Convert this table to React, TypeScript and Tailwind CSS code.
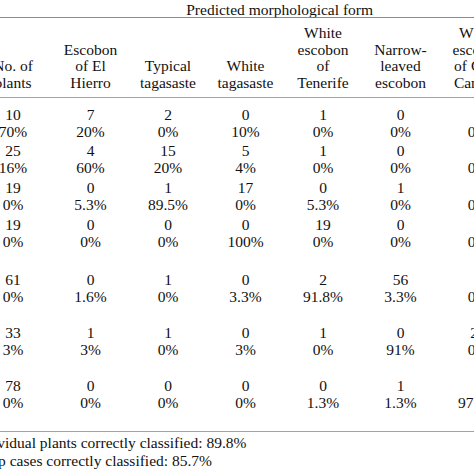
const headers: string[][] = [
  ["No. of", "plants"],
  ["Escobon", "of El", "Hierro"],
  ["Typical", "tagasaste"],
  ["White", "tagasaste"],
  ["White", "escobon", "of", "Tenerife"],
  ["Narrow-", "leaved", "escobon"],
  ["White", "escobon", "of Gran", "Canaria"],
]

// each cell: [count, percent]
const groups: { tall: boolean; cells: [string, string][] }[] = [
  { tall: false, cells: [["10", "70%"], ["7", "20%"], ["2", "0%"], ["0", "10%"], ["1", "0%"], ["0", "0%"], ["0", "0%"]] },
  { tall: false, cells: [["25", "16%"], ["4", "60%"], ["15", "20%"], ["5", "4%"], ["1", "0%"], ["0", "0%"], ["0", "0%"]] },
  { tall: false, cells: [["19", "0%"], ["0", "5.3%"], ["1", "89.5%"], ["17", "0%"], ["0", "5.3%"], ["1", "0%"], ["0", "0%"]] },
  { tall: false, cells: [["19", "0%"], ["0", "0%"], ["0", "0%"], ["0", "100%"], ["19", "0%"], ["0", "0%"], ["0", "0%"]] },
  { tall: true, cells: [["61", "0%"], ["0", "1.6%"], ["1", "0%"], ["0", "3.3%"], ["2", "91.8%"], ["56", "3.3%"], ["0", "0%"]] },
  { tall: true, cells: [["33", "3%"], ["1", "3%"], ["1", "0%"], ["0", "3%"], ["1", "0%"], ["0", "91%"], ["29", "0%"]] },
  { tall: true, cells: [["78", "0%"], ["0", "0%"], ["0", "0%"], ["0", "0%"], ["0", "1.3%"], ["1", "1.3%"], ["2", "97.4%"]] },
]

export default function App() {
  return (
    <div
      className="w-[474px] h-[474px] overflow-hidden bg-white text-[#111] text-[15.5px]"
      style={{ fontFamily: '"Liberation Serif", "Times New Roman", serif' }}
    >
      <div className="w-[560px] ml-[-25.75px]">
        {/* Spanner title */}
        <div className="h-[17px] pt-[1px] leading-[17px] pl-[212px] whitespace-nowrap">
          Predicted morphological form
        </div>
        <div className="h-px bg-[#6f6f6f] opacity-80" />

        {/* Column headers */}
        <div className="grid grid-cols-[repeat(7,77.5px)] items-end h-[79px] pb-[6px]">
          {headers.map((lines, i) => (
            <div key={i} className="text-center leading-[16.5px] whitespace-nowrap">
              {lines.map((l) => (
                <div key={l}>{l}</div>
              ))}
            </div>
          ))}
        </div>
        <div className="h-px bg-[#7a7a7a] opacity-70" />

        {/* Body */}
        <div className="pt-[7.5px]">
          {groups.map((g, gi) => (
            <div
              key={gi}
              className={
                g.tall
                  ? "grid grid-cols-[repeat(7,77.5px)] h-[53px] pt-[19px] leading-[17px]"
                  : "grid grid-cols-[repeat(7,77.5px)] h-[36.7px] leading-[17px]"
              }
            >
              {g.cells.map(([n, p], ci) => (
                <div key={ci} className="text-center whitespace-nowrap">
                  <div>{n}</div>
                  <div>{p}</div>
                </div>
              ))}
            </div>
          ))}
        </div>

        <div className="mt-[20px] h-px bg-[#7a7a7a] opacity-70" />

        {/* Footer */}
        <div className="pt-[2px] leading-[18px] whitespace-nowrap">
          <div className="ml-[-2px]">Individual plants correctly classified: 89.8%</div>
          <div className="ml-[-8px]">Group cases correctly classified: 85.7%</div>
        </div>
      </div>
    </div>
  )
}
